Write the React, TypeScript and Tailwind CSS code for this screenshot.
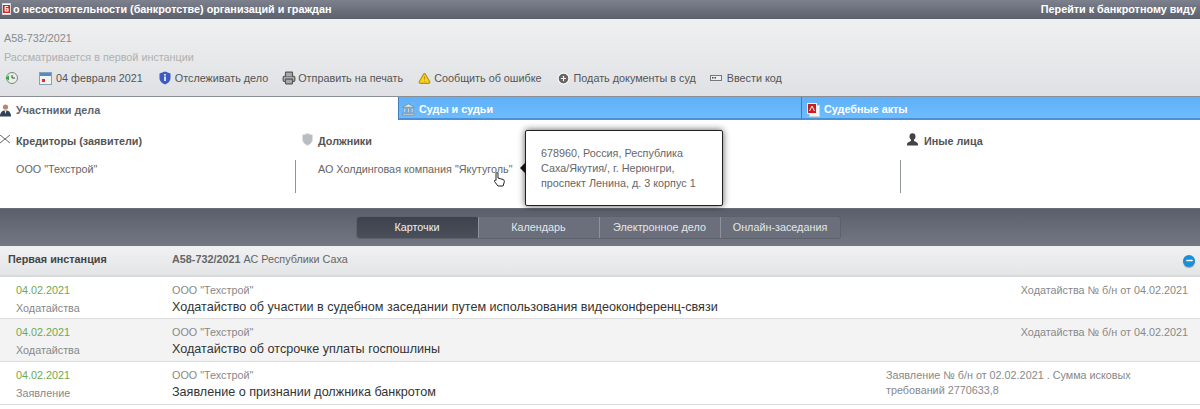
import React from 'react';
import { Printer, TriangleAlert, CirclePlus, Minus } from 'lucide-react';

const rows = [
  { date: '04.02.2021', kind: 'Ходатайства', title: 'Ходатайство об участии в судебном заседании путем использования видеоконференц-связи', note: 'Ходатайства № б/н от 04.02.2021', bg: 'bg-white', h: 'h-[42px]' },
  { date: '04.02.2021', kind: 'Ходатайства', title: 'Ходатайство об отсрочке уплаты госпошлины', note: 'Ходатайства № б/н от 04.02.2021', bg: 'bg-[#f3f3f3]', h: 'h-[43px]' },
  { date: '04.02.2021', kind: 'Заявление', title: 'Заявление о признании должника банкротом', note: 'Заявление № б/н от 02.02.2021 . Сумма исковых требований 2770633,8', bg: 'bg-white', h: 'h-[43px]', wide: true },
];

const DocIcon = () => (
  <svg width="9" height="12" viewBox="0 0 9 12" className="shrink-0">
    <rect x="0.25" y="0.25" width="8.5" height="11.5" fill="#fff" stroke="#ccc" strokeWidth="0.5" />
    <rect x="1" y="2" width="7" height="8" fill="#d3251f" />
    <path d="M6.2 3.5H3.2V8H6V5.8H3.2" fill="none" stroke="#fff" strokeWidth="1.1" />
  </svg>
);

const PdfIcon = () => (
  <svg width="13" height="14" viewBox="0 0 13 14" className="shrink-0">
    <rect x="2.5" y="2.5" width="10" height="11" fill="#f4f4f4" stroke="#c9d4de" />
    <rect x="0.5" y="0.5" width="9" height="10" fill="#c81e1e" stroke="#eee" />
    <path d="M2.5 8 L5 3 L7.5 8" fill="none" stroke="#fff" strokeWidth="1" />
  </svg>
);

const BankIcon = () => (
  <svg width="13" height="13" viewBox="0 0 14 13" className="shrink-0">
    <path d="M7 0.5 L13.5 4 H0.5 Z" fill="#e4e7ea" stroke="#6f7a85" strokeWidth="0.6" />
    <path d="M2 5h2v5H2zM6 5h2v5H6zM10 5h2v5h-2z" fill="#d4d8dc" stroke="#6f7a85" strokeWidth="0.5" />
    <rect x="0.5" y="10.5" width="13" height="2" fill="#c9cdd2" stroke="#6f7a85" strokeWidth="0.5" />
  </svg>
);

const SuitIcon = () => (
  <svg width="11" height="13" viewBox="0 0 11 13" className="shrink-0">
    <circle cx="5.5" cy="3" r="2.6" fill="#b98a66" />
    <path d="M0 12.5 C0 8.5 2 7 4 6.5 H7 C9 7 11 8.5 11 12.5 Z" fill="#2f4258" />
    <path d="M4.5 6.5 H6.5 L5.5 10 Z" fill="#e8eef4" />
  </svg>
);

const PersonIcon = () => (
  <svg width="11" height="13" viewBox="0 0 11 13" className="shrink-0 -mt-[3px]">
    <ellipse cx="5.5" cy="3.6" rx="3" ry="3.4" fill="#444" />
    <path d="M0 12.5 V11 C0 9.5 2.5 8.8 4 8 V6 H7 V8 C8.5 8.8 11 9.5 11 11 V12.5 Z" fill="#444" />
  </svg>
);

export default function App() {
  return (
    <div className="w-[1200px] h-[409px] overflow-hidden bg-white text-[10.8px] text-[#666] font-['Liberation_Sans',Arial,sans-serif]">
      {/* top bar */}
      <div className="h-[19px] flex items-center justify-between pl-[2px] pr-[4px] pb-[1px] bg-gradient-to-b from-[#7d818e] to-[#5b606b] text-white font-bold">
        <div className="flex items-center gap-[2px]">
          <DocIcon />
          <span>о несостоятельности (банкротстве) организаций и граждан</span>
        </div>
        <span>Перейти к банкротному виду</span>
      </div>

      {/* case header */}
      <div className="h-[78px] bg-gradient-to-b from-[#eff0f1] to-[#dfe1e4] border-b border-[#8a8e96] pl-[4px]">
        <div className="pt-[12px] leading-[14px] text-[#8a8a8a]">А58-732/2021</div>
        <div className="pt-[5px] leading-[14px] text-[#b0b0b0]">Рассматривается в первой инстанции</div>
        <div className="mt-[6px] flex items-center h-[16px] text-[#555]">
          <svg width="14" height="14" viewBox="0 0 14 14" className="ml-[1px] shrink-0">
            <circle cx="7" cy="7" r="5.5" fill="#e8efe8" stroke="#7b8a7b" />
            <path d="M7 4v3h3" fill="none" stroke="#444" />
            <path d="M0.5 7 L4 4.5 V9.5 Z" fill="#2fa83a" />
          </svg>
          <svg width="13" height="14" viewBox="0 0 13 14" className="ml-[20px] shrink-0">
            <rect x="0.5" y="1.5" width="12" height="12" fill="#f2f2f2" stroke="#8aa0b5" />
            <rect x="1" y="2" width="11" height="3" fill="#4f8dc9" />
            <rect x="3" y="8" width="3" height="3" fill="#d8342c" />
          </svg>
          <span className="ml-[4px]">04 февраля 2021</span>
          <svg width="12" height="14" viewBox="0 0 12 14" className="ml-[16px] shrink-0">
            <path d="M6 0.5 L11.5 2.5 V7 C11.5 10.5 8.5 12.5 6 13.5 C3.5 12.5 0.5 10.5 0.5 7 V2.5 Z" fill="#3c5bc4" />
            <rect x="5.2" y="5.5" width="1.6" height="4.5" fill="#fff" />
            <rect x="5.2" y="3" width="1.6" height="1.6" fill="#fff" />
          </svg>
          <span className="ml-[4px]">Отслеживать дело</span>
          <Printer size={14} className="ml-[14px] shrink-0 text-[#555]" fill="#aaa" />
          <span className="ml-[2px]">Отправить на печать</span>
          <TriangleAlert size={13} className="ml-[15px] shrink-0 text-[#b8900c]" fill="#f6d21f" />
          <span className="ml-[3px]">Сообщить об ошибке</span>
          <CirclePlus size={13} className="ml-[15px] shrink-0 text-white" fill="#666" />
          <span className="ml-[4px]">Подать документы в суд</span>
          <svg width="12" height="6" viewBox="0 0 12 6" className="ml-[14px] shrink-0">
            <rect x="0.5" y="0.5" width="11" height="5" fill="#eee" stroke="#777" />
            <rect x="2" y="2" width="1.5" height="1.5" fill="#444" />
            <rect x="4.5" y="2" width="1.5" height="1.5" fill="#444" />
          </svg>
          <span className="ml-[5px]">Ввести код</span>
        </div>
      </div>

      {/* tabs */}
      <div className="h-[23px] flex font-bold">
        <div className="w-[398px] flex items-center pt-[4px] gap-[5px] text-[#5c6470] bg-white">
          <SuitIcon />
          <span>Участники дела</span>
        </div>
        <div className="w-[403px] flex items-center pl-[3px] pt-[4px] gap-[4px] text-white bg-gradient-to-b from-[#5fb0f7] to-[#6dbcff] border-b-2 border-[#4a91d6] border-l border-l-[#3f7fbd]">
          <BankIcon />
          <span>Суды и судьи</span>
        </div>
        <div className="flex-1 flex items-center pl-[5px] pt-[4px] gap-[4px] text-white bg-gradient-to-b from-[#5fb0f7] to-[#6dbcff] border-b-2 border-[#4a91d6] border-l border-l-[#3f7fbd]">
          <PdfIcon />
          <span>Судебные акты</span>
        </div>
      </div>

      {/* participants */}
      <div className="relative h-[89px] grid grid-cols-[295px_305px_300px_300px] border-b border-[#6a6e78]">
        <div>
          <div className="flex items-center h-[16px] mt-[13px] font-bold text-[#555]">
            <svg width="11" height="9" viewBox="0 0 11 9" className="shrink-0 -mt-[3px]">
              <path d="M0 0 L10 8 M10 0 L0 8" stroke="#666" strokeWidth="1" />
            </svg>
            <span className="ml-[5px]">Кредиторы (заявители)</span>
          </div>
          <div className="ml-[16px] mt-[12px] text-[#666]">ООО "Техстрой"</div>
        </div>
        <div className="relative">
          <div className="absolute left-0 top-[40px] h-[33px] w-px bg-[#8f959e]" />
          <div className="flex items-center h-[16px] mt-[13px] ml-[7px] font-bold text-[#555]">
            <svg width="11" height="13" viewBox="0 0 11 13" className="shrink-0 -mt-[3px]">
              <path d="M5.5 0.5 L10.5 2 V6.5 C10.5 9.5 8 11.5 5.5 12.5 C3 11.5 0.5 9.5 0.5 6.5 V2 Z" fill="#b9bdc1" stroke="#dcdfe2" />
            </svg>
            <span className="ml-[5px]">Должники</span>
          </div>
          <div className="ml-[23px] mt-[12px] text-[#666]">АО Холдинговая компания "Якутуголь"</div>
        </div>
        <div />
        <div className="relative">
          <div className="absolute left-0 top-[40px] h-[33px] w-px bg-[#8f959e]" />
          <div className="flex items-center h-[16px] mt-[13px] ml-[7px] font-bold text-[#555]">
            <PersonIcon />
            <span className="ml-[6px]">Иные лица</span>
          </div>
        </div>

        {/* tooltip over the participants */}
        <div className="absolute left-[525px] top-[10px] w-[198px] h-[76px] bg-white border border-[#222] rounded-[2px] shadow-[0_0_7px_rgba(0,0,0,0.65)] pl-[15px] pt-[15px] leading-[15px] text-[#666]">
          <div>678960, Россия, Республика</div>
          <div>Саха/Якутия/, г. Нерюнгри,</div>
          <div>проспект Ленина, д. 3 корпус 1</div>
          <div className="absolute -left-[6px] top-[31px] w-0 h-0 border-y-[6px] border-y-transparent border-r-[6px] border-r-[#111]" />
        </div>
        <svg width="13" height="15" viewBox="0 0 13 15" className="absolute left-[493px] top-[52px]">
          <path d="M3 1.5 C3 0.5 5 0.5 5 1.5 V6 L10 7.5 C11.5 8 11.5 9 11 11 L10 14 H5 L1.5 9.5 C1 8.5 2 7.5 3 8.5 Z" fill="#fff" stroke="#222" strokeWidth="1" />
        </svg>
      </div>

      {/* view switcher */}
      <div className="h-[37px] flex items-center justify-center bg-gradient-to-b from-[#5a5f6b] to-[#737884] pr-[4px]">
        <div className="flex h-[23px] rounded-[3px] border border-[#5c616c] text-[#e4e6e9]">
          <div className="w-[121px] flex items-center justify-center bg-gradient-to-b from-[#3e424c] to-[#4b4f5a] text-[#f0f0f0] rounded-l-[3px]">Карточки</div>
          <div className="w-[121px] flex items-center justify-center border-l border-[#8d929c] bg-[#6a6f7b]">Календарь</div>
          <div className="w-[121px] flex items-center justify-center border-l border-[#8d929c] bg-[#6a6f7b]">Электронное дело</div>
          <div className="w-[120px] flex items-center justify-center border-l border-[#8d929c] bg-[#6a6f7b] rounded-r-[3px]">Онлайн-заседания</div>
        </div>
      </div>

      {/* instance header */}
      <div className="h-[31px] flex items-center bg-gradient-to-b from-[#f0f1f2] to-[#e3e5e7] border-b-2 border-[#d8dadc] pl-[8px] pr-[5px] pb-[2px]">
        <div className="w-[164px] font-bold text-[#444]">Первая инстанция</div>
        <div className="text-[#666]"><span className="font-bold">А58-732/2021</span> АС Республики Саха</div>
        <div className="ml-auto mt-[2px] w-[12px] h-[12px] rounded-full bg-[#1b8fd6] shadow-[0_1px_1px_rgba(0,0,0,0.3)] flex items-center justify-center">
          <Minus size={9} strokeWidth={4} className="text-white" />
        </div>
      </div>

      {/* rows */}
      {rows.map((r, i) => (
        <div key={i} className={`${r.h} ${r.bg} flex border-b border-[#dcdcdc]`}>
          <div className="w-[172px] pl-[16px] pt-[4px] leading-[18px]">
            <div className="text-[#6fa84f]">{r.date}</div>
            <div className="text-[#888]">{r.kind}</div>
          </div>
          <div className="flex-1 pt-[5px] leading-[17px]">
            <div className="text-[#888]">ООО "Техстрой"</div>
            <div className="text-[12.6px] text-[#333]">{r.title}</div>
          </div>
          {r.wide ? (
            <div className="w-[314px] pt-[6px] pr-[50px] leading-[15px] text-[#888]">{r.note}</div>
          ) : (
            <div className="w-[320px] pr-[12px] pt-[5px] leading-[17px] text-right text-[#888]">{r.note}</div>
          )}
        </div>
      ))}
    </div>
  );
}
